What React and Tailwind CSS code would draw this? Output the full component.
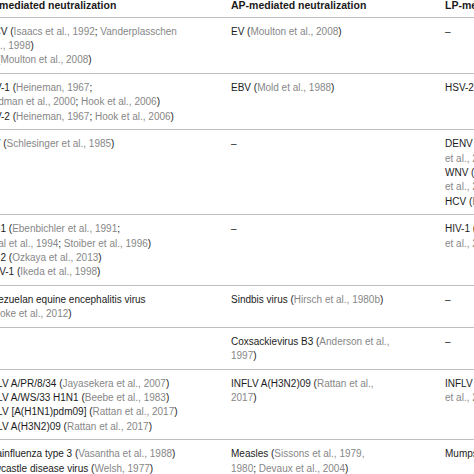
import React from "react";

const G = ({ children }) => <span className="text-[#878787]">{children}</span>;
const L = ({ children }) => <div className="whitespace-nowrap">{children}</div>;

const rows = [
  [
    [
      <>VACV (<G>Isaacs et al., 1992</G>; <G>Vanderplasschen</G></>,
      <><G>et al., 1998</G>)</>,
      <>EV (<G>Moulton et al., 2008</G>)</>,
    ],
    [<>EV (<G>Moulton et al., 2008</G>)</>],
    [<>–</>],
  ],
  [
    [
      <>HSV-1 (<G>Heineman, 1967</G>;</>,
      <><G>Friedman et al., 2000</G>; <G>Hook et al., 2006</G>)</>,
      <>HSV-2 (<G>Heineman, 1967</G>; <G>Hook et al., 2006</G>)</>,
    ],
    [<>EBV (<G>Mold et al., 1988</G>)</>],
    [<>HSV-2 (<G>Gadjeva et al., 2004</G>)</>],
  ],
  [
    [<>YFV (<G>Schlesinger et al., 1985</G>)</>],
    [<>–</>],
    [
      <>DENV (<G>Avirutnan et al., 2011</G>)</>,
      <><G>et al., 2011</G>)</>,
      <>WNV (<G>Fuchs et al., 2010</G>)</>,
      <><G>et al., 2010</G>)</>,
      <>HCV (<G>Brown et al., 2010</G>)</>,
    ],
  ],
  [
    [
      <>HIV-1 (<G>Ebenbichler et al., 1991</G>;</>,
      <><G>Süsal et al., 1994</G>; <G>Stoiber et al., 1996</G>)</>,
      <>HIV-2 (<G>Ozkaya et al., 2013</G>)</>,
      <>HTLV-1 (<G>Ikeda et al., 1998</G>)</>,
    ],
    [<>–</>],
    [<>HIV-1 (<G>Ying et al., 2004</G>)</>, <><G>et al., 2004</G>)</>],
  ],
  [
    [<>Venezuelan equine encephalitis virus</>, <>(<G>Brooke et al., 2012</G>)</>],
    [<>Sindbis virus (<G>Hirsch et al., 1980b</G>)</>],
    [<>–</>],
  ],
  [
    [],
    [<>Coxsackievirus B3 (<G>Anderson et al.,</G></>, <><G>1997</G>)</>],
    [<>–</>],
  ],
  [
    [
      <>INFLV A/PR/8/34 (<G>Jayasekera et al., 2007</G>)</>,
      <>INFLV A/WS/33 H1N1 (<G>Beebe et al., 1983</G>)</>,
      <>INFLV [A(H1N1)pdm09] (<G>Rattan et al., 2017</G>)</>,
      <>INFLV A(H3N2)09 (<G>Rattan et al., 2017</G>)</>,
    ],
    [<>INFLV A(H3N2)09 (<G>Rattan et al.,</G></>, <><G>2017</G>)</>],
    [<>INFLV A(H1N1) (<G>Reading</G></>, <><G>et al., 2008</G>)</>],
  ],
  [
    [
      <>Parainfluenza type 3 (<G>Vasantha et al., 1988</G>)</>,
      <>Newcastle disease virus (<G>Welsh, 1977</G>)</>,
    ],
    [<>Measles (<G>Sissons et al., 1979,</G></>, <><G>1980</G>; <G>Devaux et al., 2004</G>)</>],
    [<>Mumps (<G>Johnson et al., 2008</G>)</>],
  ],
];

export default function App() {
  return (
    <div className="w-[474px] h-[474px] overflow-hidden bg-white font-['Liberation_Sans',Arial,sans-serif] text-[10px] leading-[14.3px] text-[#1c1c1c]">
      <div className="w-[720px] -ml-[19px] -mt-[2px]">
        <div className="grid grid-cols-[250px_214px_256px] border-b border-[#bfbfbf] pb-[4.5px] font-bold text-[10.5px] text-[#1a1a1a]">
          <div className="whitespace-nowrap">CP-mediated neutralization</div>
          <div className="whitespace-nowrap">AP-mediated neutralization</div>
          <div className="whitespace-nowrap">LP-mediated neutralization</div>
        </div>
        {rows.map((r, i) => (
          <div
            key={i}
            className="grid grid-cols-[250px_214px_256px] border-b border-[#bfbfbf] pt-[7px] pb-[5.4px]"
          >
            {r.map((cell, j) => (
              <div key={j}>
                {cell.map((line, k) => (
                  <L key={k}>{line}</L>
                ))}
              </div>
            ))}
          </div>
        ))}
      </div>
    </div>
  );
}
